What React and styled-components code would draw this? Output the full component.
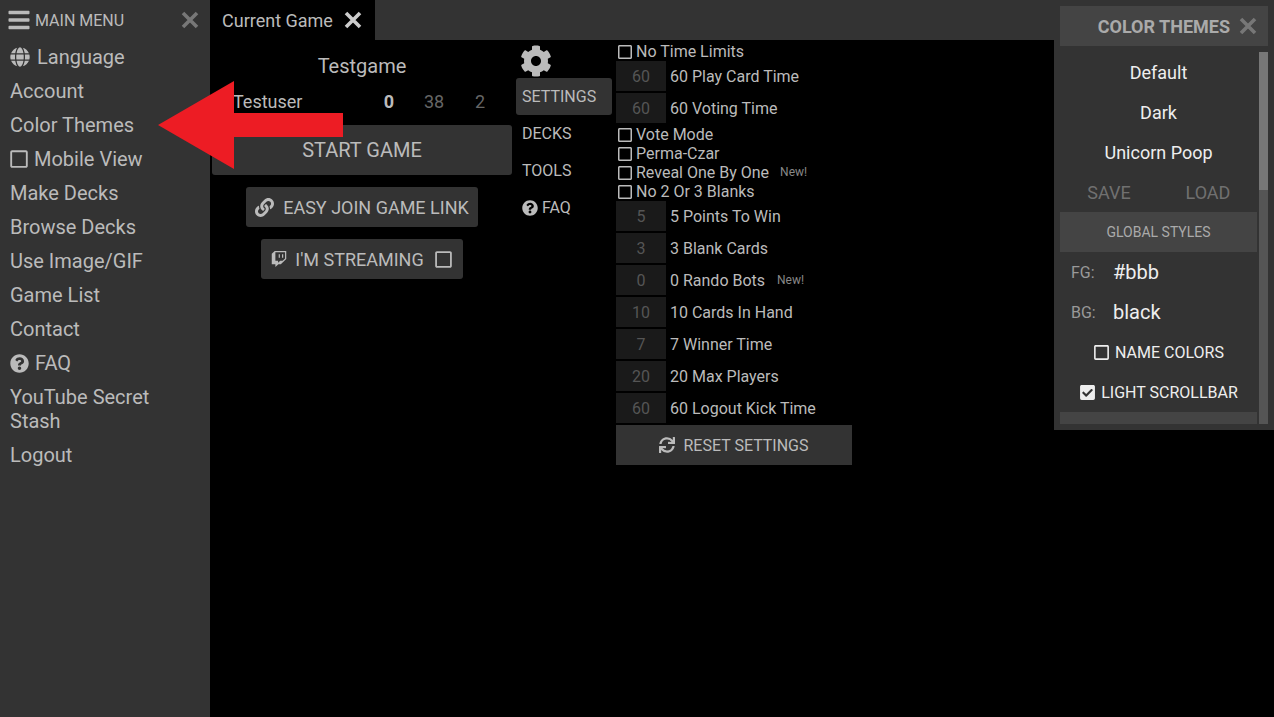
import styled, { createGlobalStyle } from "styled-components";
import {
  FaBars,
  FaGlobe,
  FaRegSquare,
  FaCheckSquare,
  FaQuestionCircle,
  FaCog,
  FaLink,
  FaTwitch,
  FaSync,
} from "react-icons/fa";

const GlobalStyle = createGlobalStyle`
  html, body {
    margin: 0;
    padding: 0;
    background: #000;
    height: 100%;
    overflow: hidden;
  }
  * { box-sizing: border-box; }
  body {
    font-family: Roboto, "Liberation Sans", sans-serif;
    color: #bbb;
  }
`;

const Page = styled.div`
  position: relative;
  display: flex;
  width: 100%;
  height: 100vh;
  overflow: hidden;
`;

const Sidebar = styled.nav`
  width: 210px;
  flex: none;
  background: #333;
`;

const MenuHeader = styled.div`
  height: 40px;
  display: flex;
  align-items: center;
  padding: 0 11px 0 7px;
  font-size: 16px;
  svg { flex: none; }
`;

const MenuTitle = styled.span`
  flex: 1;
  margin-left: 4px;
`;

const MenuItem = styled.div`
  display: flex;
  align-items: center;
  gap: ${(p) => p.$gap || 0}px;
  padding: 5px 10px;
  font-size: 20px;
  line-height: 24px;
  svg { flex: none; }
`;

const MenuCheckbox = styled(FaRegSquare)`
  margin-left: -1px;
`;

const Content = styled.div`
  flex: 1;
  min-width: 0;
  display: flex;
  flex-direction: column;
`;

const TabBar = styled.div`
  height: 40px;
  flex: none;
  background: #333;
  display: flex;
`;

const Tab = styled.div`
  width: 165px;
  background: #000;
  display: flex;
  align-items: center;
  justify-content: space-between;
  padding: 0 13px 0 12px;
  font-size: 18px;
`;

const Game = styled.div`
  flex: 1;
  display: flex;
  align-items: flex-start;
`;

const LobbyColumn = styled.section`
  width: 304px;
  flex: none;
  padding: 13px 2px 0;
  display: flex;
  flex-direction: column;
  align-items: center;
`;

const GameName = styled.div`
  height: 26px;
  line-height: 26px;
  font-size: 20px;
`;

const PlayerRow = styled.div`
  align-self: stretch;
  height: 46px;
  padding: 11px 0 0 21px;
  display: grid;
  grid-template-columns: 134px 44px 46px 46px;
  font-size: 18px;
  line-height: 24px;
`;

const Score = styled.span`
  text-align: center;
  font-weight: ${(p) => (p.$bold ? 700 : 400)};
  color: ${(p) => (p.$bold ? "#bbb" : "#666")};
`;

const Button = styled.div`
  height: ${(p) => p.$height || 40}px;
  width: ${(p) => (p.$width ? `${p.$width}px` : "auto")};
  margin-bottom: 12px;
  background: #333;
  border-radius: 3px;
  display: flex;
  align-items: center;
  justify-content: center;
  gap: ${(p) => p.$gap || 8}px;
  font-size: ${(p) => p.$size || 18}px;
  color: #bbb;
  white-space: nowrap;
`;

const StreamingCheckbox = styled(FaRegSquare)`
  margin-left: 2px;
`;

const TabsColumn = styled.aside`
  width: 96px;
  margin-left: 2px;
  flex: none;
  padding-top: 3px;
`;

const GearRow = styled.div`
  height: 35px;
  padding-left: 4px;
  display: flex;
  align-items: center;
`;

const SideTab = styled.div`
  height: 37px;
  padding: 0 6px;
  display: flex;
  align-items: center;
  gap: 4px;
  font-size: 16px;
  border-radius: 3px;
  background: ${(p) => (p.$active ? "#333" : "transparent")};
`;

const SettingsColumn = styled.section`
  width: 236px;
  margin-left: 4px;
  flex: none;
  padding-top: 2px;
`;

const CheckGroup = styled.div`
  margin-top: 2px;
`;

const CheckRow = styled.div`
  height: 19px;
  display: flex;
  align-items: center;
  padding-left: 1px;
  gap: 3px;
  font-size: 16px;
  line-height: 19px;
  white-space: nowrap;
  svg { flex: none; }
`;

const NewTag = styled.span`
  margin-left: 8px;
  font-size: 12px;
  color: #888;
`;

const NumberRow = styled.div`
  height: 30px;
  margin-top: ${(p) => (p.$first ? 0 : "2px")};
  display: flex;
  align-items: center;
  gap: 4px;
  font-size: 16px;
  white-space: nowrap;
`;

const NumberBox = styled.div`
  width: 50px;
  height: 30px;
  background: #1a1a1a;
  color: #555;
  display: flex;
  align-items: center;
  justify-content: center;
`;

const ResetButton = styled(Button)`
  margin-top: 2px;
  border-radius: 0;
  font-size: 16px;
`;

const ThemePanel = styled.div`
  position: absolute;
  top: 0;
  right: 0;
  width: 220px;
  height: 430px;
  padding: 6px;
  background: #333;
  display: flex;
  flex-direction: column;
`;

const PanelHeader = styled.div`
  height: 40px;
  flex: none;
  background: #444;
  display: flex;
  align-items: center;
  justify-content: flex-end;
  gap: 9px;
  padding-right: 11px;
  font-size: 18px;
  font-weight: 700;
  color: #aaa;
`;

const PanelBody = styled.div`
  flex: 1;
  min-height: 0;
  margin-top: 6px;
  display: flex;
  gap: 2px;
`;

const PanelScroll = styled.div`
  flex: 1;
  min-width: 0;
  overflow: hidden;
`;

const Scrollbar = styled.div`
  width: 9px;
  flex: none;
  background: #555;
`;

const ScrollThumb = styled.div`
  height: 138px;
  background: #777;
`;

const ThemeRow = styled.div`
  height: 40px;
  display: flex;
  align-items: center;
  justify-content: center;
  gap: 5px;
  font-size: ${(p) => p.$size || 18}px;
  color: #eee;
  svg { flex: none; }
`;

const SaveLoad = styled.div`
  height: 40px;
  display: grid;
  grid-template-columns: 98px 100px;
  align-items: center;
  justify-items: center;
  font-size: 18px;
  color: #707070;
`;

const SectionBar = styled.div`
  height: 40px;
  flex: none;
  background: #444;
  display: flex;
  align-items: center;
  justify-content: center;
  font-size: 14px;
  color: #aaa;
`;

const ColorRow = styled.div`
  height: 40px;
  display: flex;
  align-items: center;
  padding-left: 11px;
`;

const ColorLabel = styled.span`
  width: 42px;
  font-size: 16px;
  color: #999;
`;

const ColorValue = styled.span`
  font-size: 20px;
  color: #eee;
`;

const ArrowOverlay = styled.svg`
  position: absolute;
  left: 158px;
  top: 81px;
`;

const CloseIcon = ({ color }) => (
  <svg width="18" height="18" viewBox="0 0 18 18">
    <path d="M2 2 L16 16 M16 2 L2 16" stroke={color} strokeWidth="3.6" fill="none" />
  </svg>
);

const menuItems = ["Make Decks", "Browse Decks", "Use Image/GIF", "Game List", "Contact"];

const topChecks = ["Vote Mode", "Perma-Czar", "Reveal One By One", "No 2 Or 3 Blanks"];

const numbers = [
  [5, "5 Points To Win"],
  [3, "3 Blank Cards"],
  [0, "0 Rando Bots", true],
  [10, "10 Cards In Hand"],
  [7, "7 Winner Time"],
  [20, "20 Max Players"],
  [60, "60 Logout Kick Time"],
];

const App = () => (
  <Page>
    <GlobalStyle />
    <Sidebar>
      <MenuHeader>
        <FaBars size={24} />
        <MenuTitle>MAIN MENU</MenuTitle>
        <CloseIcon color="#777" />
      </MenuHeader>
      <MenuItem $gap={7}>
        <FaGlobe size={20} /> Language
      </MenuItem>
      <MenuItem>Account</MenuItem>
      <MenuItem>Color Themes</MenuItem>
      <MenuItem $gap={5}>
        <MenuCheckbox size={20} /> Mobile View
      </MenuItem>
      {menuItems.map((item) => (
        <MenuItem key={item}>{item}</MenuItem>
      ))}
      <MenuItem $gap={6}>
        <FaQuestionCircle size={19} /> FAQ
      </MenuItem>
      <MenuItem>
        YouTube Secret
        <br />
        Stash
      </MenuItem>
      <MenuItem>Logout</MenuItem>
    </Sidebar>

    <Content>
      <TabBar>
        <Tab>
          Current Game
          <CloseIcon color="#ccc" />
        </Tab>
      </TabBar>
      <Game>
        <LobbyColumn>
          <GameName>Testgame</GameName>
          <PlayerRow>
            <span>Testuser</span>
            <Score $bold>0</Score>
            <Score>38</Score>
            <Score>2</Score>
          </PlayerRow>
          <Button $height={50} $width={300} $size={20}>
            START GAME
          </Button>
          <Button $width={232} $gap={9}>
            <FaLink size={19} /> EASY JOIN GAME LINK
          </Button>
          <Button $width={202}>
            <FaTwitch size={16} /> I'M STREAMING
            <StreamingCheckbox size={19} />
          </Button>
        </LobbyColumn>

        <TabsColumn>
          <GearRow>
            <FaCog size={32} />
          </GearRow>
          <SideTab $active>SETTINGS</SideTab>
          <SideTab>DECKS</SideTab>
          <SideTab>TOOLS</SideTab>
          <SideTab>
            <FaQuestionCircle size={16} /> FAQ
          </SideTab>
        </TabsColumn>

        <SettingsColumn>
          <CheckRow>
            <FaRegSquare size={16} /> No Time Limits
          </CheckRow>
          <NumberRow $first>
            <NumberBox>60</NumberBox> 60 Play Card Time
          </NumberRow>
          <NumberRow>
            <NumberBox>60</NumberBox> 60 Voting Time
          </NumberRow>
          <CheckGroup>
            {topChecks.map((label) => (
              <CheckRow key={label}>
                <FaRegSquare size={16} /> {label}
                {label === "Reveal One By One" && <NewTag>New!</NewTag>}
              </CheckRow>
            ))}
          </CheckGroup>
          {numbers.map(([value, label, isNew], i) => (
            <NumberRow key={label} $first={i === 0}>
              <NumberBox>{value}</NumberBox> {label}
              {isNew && <NewTag>New!</NewTag>}
            </NumberRow>
          ))}
          <ResetButton>
            <FaSync size={16} /> RESET SETTINGS
          </ResetButton>
        </SettingsColumn>
      </Game>
    </Content>

    <ThemePanel>
      <PanelHeader>
        COLOR THEMES
        <CloseIcon color="#777" />
      </PanelHeader>
      <PanelBody>
        <PanelScroll>
          <ThemeRow>Default</ThemeRow>
          <ThemeRow>Dark</ThemeRow>
          <ThemeRow>Unicorn Poop</ThemeRow>
          <SaveLoad>
            <span>SAVE</span>
            <span>LOAD</span>
          </SaveLoad>
          <SectionBar>GLOBAL STYLES</SectionBar>
          <ColorRow>
            <ColorLabel>FG:</ColorLabel>
            <ColorValue>#bbb</ColorValue>
          </ColorRow>
          <ColorRow>
            <ColorLabel>BG:</ColorLabel>
            <ColorValue>black</ColorValue>
          </ColorRow>
          <ThemeRow $size={16}>
            <FaRegSquare size={17} /> NAME COLORS
          </ThemeRow>
          <ThemeRow $size={16}>
            <FaCheckSquare size={17} /> LIGHT SCROLLBAR
          </ThemeRow>
          <SectionBar />
        </PanelScroll>
        <Scrollbar>
          <ScrollThumb />
        </Scrollbar>
      </PanelBody>
    </ThemePanel>

    <ArrowOverlay width="185" height="88" viewBox="0 0 185 88">
      <polygon points="0,44 76,0 76,32 185,32 185,56 76,56 76,88" fill="#ed1c24" />
    </ArrowOverlay>
  </Page>
);

export default App;
